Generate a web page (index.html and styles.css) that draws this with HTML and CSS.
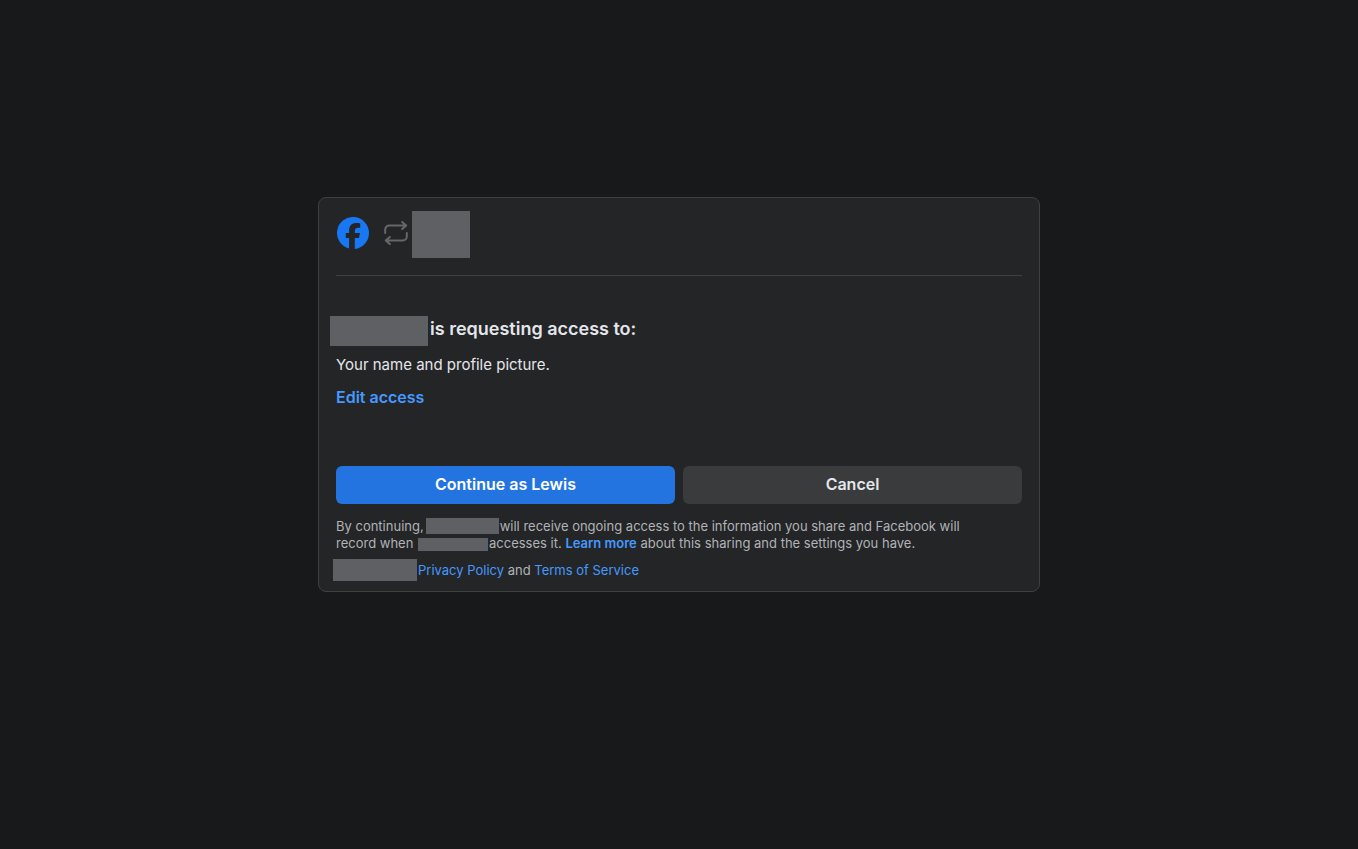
FILE: index.html
```html
<!DOCTYPE html>
<html lang="en">
<head>
    <meta charset="UTF-8">
    <meta name="viewport" content="width=device-width, initial-scale=1.0">
    <title>Log in with Facebook</title>
    <link rel="stylesheet" href="styles.css">
</head>
<body>
    <main class="dialog">
        <header class="dialog-header">
            <svg class="fb-logo" viewBox="0 0 32 32" aria-hidden="true">
                <path fill="#1877f2" d="M32 16A16 16 0 1 0 12.1 31.5V20.9H8.800V16h3.300v-2.100c0-5.400 2.400-7.900 7.700-7.900 1 0 2.700.2 3.400.4v4.500c-.4 0-1-.1-1.800-.1-2.600 0-3.600 1-3.600 3.500V16h5.100l-.9 4.900h-4.200v11A16 16 0 0 0 32 16z"/>
            </svg>
            <svg class="sync-icon" viewBox="0 0 24 24" aria-hidden="true">
                <path d="M1.2 12V8.500a4 4 0 0 1 4-4h17M18.200 1l4 3.500-4 3.500M22.800 12v3.500a4 4 0 0 1-4 4h-17M5.800 16l-4 3.500 4 3.500"/>
            </svg>
            <span class="redacted redacted-logo"></span>
        </header>

        <section class="request">
            <h1><span class="redacted redacted-title"></span>is requesting access to:</h1>
            <p>Your name and profile picture.</p>
            <a class="edit-link" href="#">Edit access</a>
        </section>

        <div class="actions">
            <button type="button" class="btn btn-primary">Continue as Lewis</button>
            <button type="button" class="btn btn-secondary">Cancel</button>
        </div>

        <footer class="legal">
            <p>By continuing,<span class="redacted redacted-name"></span>will receive ongoing access to the information you share and Facebook will record when <span class="redacted redacted-app"></span>accesses it. <a class="learn-more" href="#">Learn more</a> about this sharing and the settings you have.</p>
            <p class="policies"><span class="redacted redacted-policy"></span><a href="#">Privacy Policy</a> and <a href="#">Terms of Service</a></p>
        </footer>
    </main>
</body>
</html>
```
FILE: styles.css
```css
* {
    box-sizing: border-box;
}
body {
    margin: 0;
    min-height: 100vh;
    padding: 20px 20px 80px;
    display: flex;
    align-items: center;
    justify-content: center;
    background-color: #18191a;
    color: #e4e6eb;
    font-family: Inter, "Liberation Sans", sans-serif;
}
h1, p {
    margin: 0;
}
a {
    color: #4599ff;
    text-decoration: none;
}
a:hover {
    text-decoration: underline;
}
.dialog {
    width: 100%;
    max-width: 722px;
    padding: 13px 17px 10px;
    background-color: #242526;
    border: 1px solid #3e4042;
    border-radius: 8px;
}
.dialog-header {
    display: flex;
    align-items: center;
    padding-bottom: 17px;
    border-bottom: 1px solid #3e4042;
}
.fb-logo {
    width: 32px;
    height: 32px;
    margin: 0 15px 4px 1px;
}
.sync-icon {
    width: 24px;
    height: 24px;
    margin: 0 4px 4px 0;
    fill: none;
    stroke: #65676b;
    stroke-width: 2;
    stroke-linecap: round;
    stroke-linejoin: round;
}

/* hidden app name and logo */
.redacted {
    display: inline-block;
    background-color: #5f6063;
    vertical-align: text-bottom;
}
.redacted-logo {
    width: 58px;
    height: 47px;
}
.redacted-title {
    width: 98px;
    height: 30px;
    margin: 0 2px 0 -6px;
}
.redacted-name {
    width: 73px;
    height: 16px;
    margin: 0 1px 0 2px;
}
.redacted-app {
    width: 70px;
    height: 13px;
    margin: 0 1px;
}
.redacted-policy {
    width: 84px;
    height: 22px;
    margin: 0 1px 0 -3px;
}

.request {
    padding: 40px 0 58px;
}
.request h1 {
    display: flex;
    font-size: 18px;
    font-weight: 600;
    line-height: 26px;
}
.request p {
    margin-top: 8px;
    font-size: 15px;
    line-height: 22px;
}
.edit-link {
    display: inline-block;
    margin-top: 10px;
    font-size: 16px;
    font-weight: 600;
    line-height: 22px;
}
.actions {
    display: grid;
    grid-template-columns: 1fr 1fr;
    gap: 8px;
}
.btn {
    height: 38px;
    padding: 0 12px 2px;
    border: none;
    border-radius: 6px;
    font-family: inherit;
    font-size: 16px;
    font-weight: 600;
    cursor: pointer;
}
.btn-primary {
    background-color: #2374e1;
    color: #fff;
}
.btn-secondary {
    background-color: #3a3b3c;
    color: #e4e6eb;
}
.legal {
    margin-top: 14px;
    padding-right: 32px;
    color: #b0b3b8;
    font-size: 13px;
    line-height: 17px;
}
.learn-more {
    font-weight: 600;
}
.policies {
    display: flex;
    align-items: center;
    margin-top: 7px;
    white-space: pre;
}
```
